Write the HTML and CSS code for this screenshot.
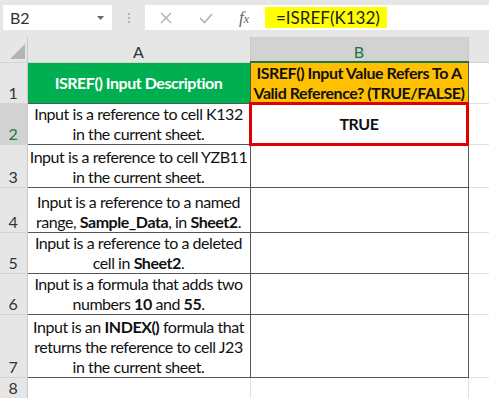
FILE: index.html
```html
<!DOCTYPE html>
<html lang="en">
<head>
    <meta charset="UTF-8">
    <title>ISREF Sheet</title>
    <link rel="stylesheet" href="styles.css">
</head>
<body>

    <div class="toolbar">
        <div class="name-box">
            <span>B2</span>
            <svg class="caret" width="7" height="4" viewBox="0 0 7 4"><path d="M0 0h7L3.5 4z" fill="#666"/></svg>
        </div>
        <div class="grip">
            <i></i><i></i><i></i>
        </div>
        <div class="formula-bar">
            <div class="fx-buttons">
                <svg width="14" height="14" viewBox="0 0 14 14"><path d="M2 2L12 12M12 2L2 12" stroke="#b0b0b0" stroke-width="1.4" fill="none"/></svg>
                <svg width="16" height="14" viewBox="0 0 16 14"><path d="M2 7l4.5 4.5L14 3" stroke="#b0b0b0" stroke-width="1.6" fill="none"/></svg>
                <span class="fx">f<sub>x</sub></span>
            </div>
            <div class="formula"><span class="formula-text">=ISREF(K132)</span></div>
        </div>
    </div>

    <table class="sheet">
        <colgroup>
            <col class="col-head">
            <col class="col-a">
            <col class="col-b">
            <col class="col-c">
        </colgroup>
        <tr class="col-headers">
            <th class="corner"><span class="corner-tri"></span></th>
            <th>A</th>
            <th class="selected">B</th>
            <th></th>
        </tr>
        <tr class="r1">
            <th>1</th>
            <td class="head-green">ISREF() Input Description</td>
            <td class="head-gold">ISREF() Input Value Refers To A<br>Valid Reference? (TRUE/FALSE)</td>
            <td class="empty"></td>
        </tr>
        <tr class="r2">
            <th class="selected">2</th>
            <td class="boxed">Input is a reference to cell K132<br>in the current sheet.</td>
            <td class="boxed active"><b>TRUE</b><span class="active-ring"></span></td>
            <td class="empty"></td>
        </tr>
        <tr class="r3">
            <th>3</th>
            <td class="boxed">Input is a reference to cell YZB11<br>in the current sheet.</td>
            <td class="boxed"></td>
            <td class="empty"></td>
        </tr>
        <tr class="r4">
            <th>4</th>
            <td class="boxed">Input is a reference to a named<br>range, <b>Sample_Data</b>, in <b>Sheet2</b>.</td>
            <td class="boxed"></td>
            <td class="empty"></td>
        </tr>
        <tr class="r5">
            <th>5</th>
            <td class="boxed">Input is a reference to a deleted<br>cell in <b>Sheet2</b>.</td>
            <td class="boxed"></td>
            <td class="empty"></td>
        </tr>
        <tr class="r6">
            <th>6</th>
            <td class="boxed">Input is a formula that adds two<br>numbers <b>10</b> and <b>55</b>.</td>
            <td class="boxed"></td>
            <td class="empty"></td>
        </tr>
        <tr class="r7">
            <th>7</th>
            <td class="boxed">Input is an <b>INDEX()</b> formula that<br>returns the reference to cell J23<br>in the current sheet.</td>
            <td class="boxed"></td>
            <td class="empty"></td>
        </tr>
        <tr class="r8">
            <th>8</th>
            <td class="empty"></td>
            <td class="empty"></td>
            <td class="empty"></td>
        </tr>
    </table>

</body>
</html>
```

FILE: styles.css
```css
* {
    margin: 0;
    padding: 0;
    box-sizing: border-box;
}

body {
    font-family: 'Lato', 'Open Sans', sans-serif;
    background: #e6e6e6;
    width: 489px;
    height: 398px;
    overflow: hidden;
    color: #222;
}

/* top toolbar */
.toolbar {
    display: flex;
    height: 37px;
    padding: 5px 0 0 3px;
    align-items: flex-start;
}

.name-box {
    width: 109px;
    height: 25px;
    background: #fff;
    display: flex;
    align-items: center;
    justify-content: space-between;
    padding: 0 8px 0 7px;
    font-size: 16px;
    color: #333;
}

.caret {
    margin-top: 1px;
}

.grip {
    width: 33px;
    height: 25px;
    display: flex;
    flex-direction: column;
    align-items: center;
    justify-content: center;
    gap: 2px;
}

.grip i {
    width: 2px;
    height: 2px;
    background: #b5b5b5;
}

.formula-bar {
    flex: 1;
    height: 25px;
    background: #fff;
    display: flex;
    align-items: center;
}

.fx-buttons {
    display: flex;
    align-items: center;
    gap: 25px;
    padding-left: 14px;
    width: 117px;
}

.fx {
    font-family: 'Liberation Serif', serif;
    font-style: italic;
    font-size: 17px;
    color: #666;
}

.fx sub {
    font-size: 12px;
    vertical-align: 0;
}

.formula {
    padding-left: 3px;
}

.formula-text {
    display: inline-block;
    background: #ffff00;
    font-size: 17px;
    line-height: 21px;
    padding: 0 7px 0 11px;
    color: #222;
}

/* sheet grid */
.sheet {
    border-collapse: collapse;
    table-layout: fixed;
    width: 489px;
    background: #fff;
    font-size: 16px;
    letter-spacing: -0.45px;
}

.col-head { width: 27px; }
.col-a { width: 223px; }
.col-b { width: 218px; }
.col-c { width: 21px; }

.sheet th {
    background: #e6e6e6;
    font-weight: normal;
    color: #333;
    font-size: 16px;
    line-height: 19px;
    letter-spacing: 0;
    text-align: center;
    border-right: 1px solid #c8c8c8;
    border-bottom: 1px solid #d4d4d4;
}

.sheet tr > th:first-child {
    vertical-align: bottom;
    padding-bottom: 1px;
}

.sheet th.selected {
    background: #d2d2d2;
    color: #217346;
}

.col-headers th {
    height: 25px;
    vertical-align: middle;
    padding-top: 4px;
}

.col-headers th.selected {
    border-bottom: 2px solid #217346;
}

.sheet .col-headers th:first-child {
    vertical-align: bottom;
    padding: 0;
}

.corner-tri {
    display: block;
    width: 0;
    height: 0;
    margin: 0 2px 3px auto;
    border-left: 15px solid transparent;
    border-bottom: 15px solid #b4b4b4;
}

.sheet td {
    text-align: center;
    line-height: 20px;
    padding: 0;
    vertical-align: bottom;
    white-space: nowrap;
}

.head-green {
    background: #00b050;
    color: #fff;
    font-weight: bold;
    vertical-align: middle !important;
    border-bottom: 1px solid #555;
}

.head-gold {
    background: #ffc000;
    color: #111;
    font-weight: bold;
    border: 1px solid #555;
}

.boxed {
    border: 1px solid #555;
    color: #111;
}

.empty {
    border-bottom: 1px solid #e0e0e0;
    border-right: 1px solid #e0e0e0;
}

.r1 { height: 41px; }
.r2 { height: 41px; }
.r3 { height: 43px; }
.r4 { height: 45px; }
.r5 { height: 41px; }
.r6 { height: 41px; }
.r7 { height: 63px; }
.r8 { height: 21px; }

.active {
    position: relative;
    vertical-align: middle !important;
}

.active-ring {
    position: absolute;
    left: -2px;
    top: -2px;
    right: -1px;
    bottom: -2px;
    border: 3px solid #e00000;
}
```
